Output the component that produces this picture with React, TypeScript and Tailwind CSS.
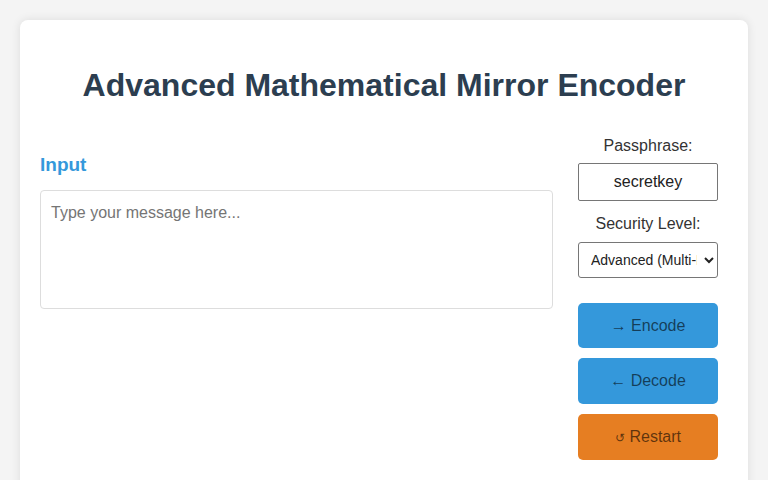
import React from "react";

export default function App() {
  return (
    <div className="min-h-screen bg-[#f4f4f4] px-[20px] pt-[20px]" style={{ fontFamily: '"Liberation Sans", Arial, sans-serif' }}>
      <div className="bg-white rounded-[8px] shadow-[0_0_10px_rgba(0,0,0,0.1)] px-[20px] pt-[47px] pb-[40px]">
        <h1 className="text-[32px] font-bold text-[#2c3e50] text-center leading-[37px] m-0">
          Advanced Mathematical Mirror Encoder
        </h1>
        <div className="flex gap-[25px] mt-[24px] pr-[10px]">
          <div className="flex-1 flex flex-col">
            <h3 className="text-[19px] font-bold text-[#3498db] leading-[22px] mt-[26px] mb-[14px]">Input</h3>
            <textarea
              className="w-full h-[119px] border border-[#dddddd] rounded-[4px] px-[10px] pt-[13px] pb-[10px] text-[16px] leading-[18px] text-[#333] placeholder:text-[#757575] resize-none outline-none"
              placeholder="Type your message here..."
            />
          </div>
          <div className="w-[140px] flex flex-col pt-[9px]">
            <label className="text-[16px] leading-[18px] text-[#333] text-center mb-[8px]">Passphrase:</label>
            <input
              className="h-[38px] w-full border border-[#767676] rounded-[2px] text-center text-[16px] text-[#222] outline-none"
              defaultValue="secretkey"
            />
            <label className="text-[16px] leading-[18px] text-[#333] text-center mt-[14px] mb-[9px]">Security Level:</label>
            <select className="h-[36px] w-full border border-[#767676] rounded-[3px] pl-[8px] pr-[4px] text-[14px] text-[#222] bg-white">
              <option>Advanced (Multi-Layer)</option>
            </select>
            <button className="mt-[25px] h-[45px] w-full rounded-[5px] bg-[#3498db] text-[16px] text-black/60">→ Encode</button>
            <button className="mt-[10px] h-[46px] w-full rounded-[5px] bg-[#3498db] text-[16px] text-black/60">← Decode</button>
            <button className="mt-[10px] h-[46px] w-full rounded-[5px] bg-[#e67e22] text-[16px] text-black/60">
              <span className="text-[12px]">↺</span> Restart
            </button>
          </div>
        </div>
      </div>
    </div>
  );
}
